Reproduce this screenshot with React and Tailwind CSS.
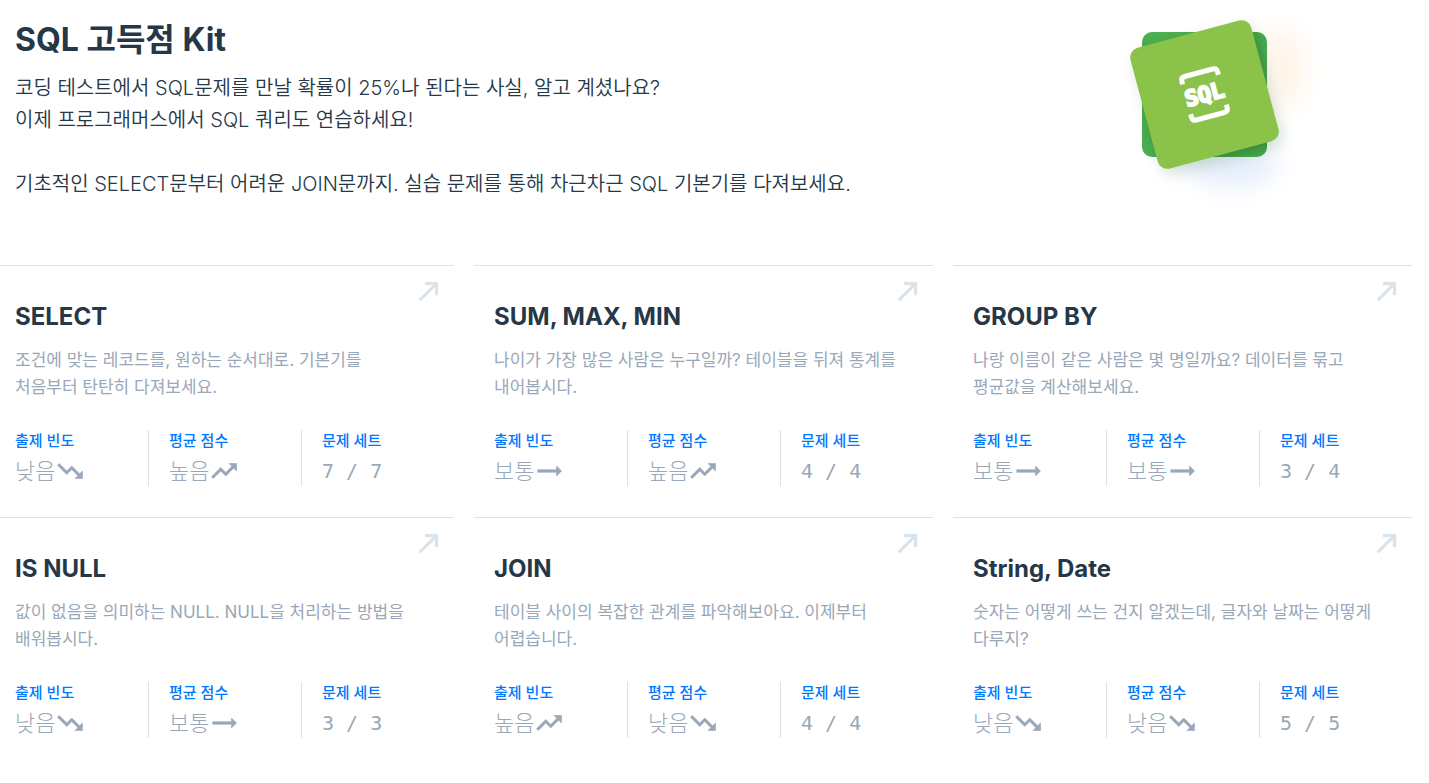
const ICONS = {
  open: 'M9 5v2h6.59L4 18.59 5.41 20 17 8.41V15h2V5z',
  down: 'M16 18l2.29-2.29-4.88-4.88-4 4L2 7.41 3.41 6l6 6 4-4 6.3 6.29L22 12v6z',
  flat: 'M22 12l-4-4v3H3v2h15v3z',
  up: 'M16 6l2.29 2.29-4.88 4.88-4-4L2 16.59 3.41 18l6-6 4 4 6.3-6.29L22 12V6z',
};

const LEVELS = {
  low: { text: '낮음', icon: 'down' },
  mid: { text: '보통', icon: 'flat' },
  high: { text: '높음', icon: 'up' },
};

const PARTS = [
  {
    title: 'SELECT',
    description: '조건에 맞는 레코드를, 원하는 순서대로. 기본기를 처음부터 탄탄히 다져보세요.',
    frequency: 'low',
    score: 'high',
    sets: '7 / 7',
  },
  {
    title: 'SUM, MAX, MIN',
    description: '나이가 가장 많은 사람은 누구일까? 테이블을 뒤져 통계를 내어봅시다.',
    frequency: 'mid',
    score: 'high',
    sets: '4 / 4',
  },
  {
    title: 'GROUP BY',
    description: '나랑 이름이 같은 사람은 몇 명일까요? 데이터를 묶고 평균값을 계산해보세요.',
    frequency: 'mid',
    score: 'mid',
    sets: '3 / 4',
  },
  {
    title: 'IS NULL',
    description: '값이 없음을 의미하는 NULL. NULL을 처리하는 방법을 배워봅시다.',
    frequency: 'low',
    score: 'mid',
    sets: '3 / 3',
  },
  {
    title: 'JOIN',
    description: '테이블 사이의 복잡한 관계를 파악해보아요. 이제부터 어렵습니다.',
    frequency: 'high',
    score: 'low',
    sets: '4 / 4',
  },
  {
    title: 'String, Date',
    description: '숫자는 어떻게 쓰는 건지 알겠는데, 글자와 날짜는 어떻게 다루지?',
    frequency: 'low',
    score: 'low',
    sets: '5 / 5',
  },
];

function Icon({ name, className }) {
  return (
    <svg
      viewBox="0 0 24 24"
      fill="currentColor"
      stroke="currentColor"
      strokeWidth="0.5"
      aria-hidden="true"
      className={`size-[30px] shrink-0 ${className || ''}`}
    >
      <path d={ICONS[name]} />
    </svg>
  );
}

function KitLogo() {
  return (
    <svg width="240" height="210" viewBox="0 0 240 210" className="shrink-0" role="img" aria-label="SQL">
      <defs>
        <filter id="glow" x="-80%" y="-80%" width="260%" height="260%">
          <feGaussianBlur stdDeviation="12" />
        </filter>
        <filter id="shade" x="-30%" y="-30%" width="160%" height="160%">
          <feGaussianBlur stdDeviation="7" />
        </filter>
        <clipPath id="back">
          <rect x="42" y="32" width="125" height="125" rx="10" />
        </clipPath>
      </defs>
      <ellipse cx="182" cy="68" rx="24" ry="40" fill="#fff4e8" filter="url(#glow)" />
      <ellipse cx="132" cy="164" rx="46" ry="22" fill="#e4edfc" filter="url(#glow)" />
      <rect x="46" y="38" width="125" height="125" rx="10" transform="rotate(-15 108 100)" fill="#1b5e20" opacity="0.18" filter="url(#shade)" />
      <rect x="42" y="32" width="125" height="125" rx="10" fill="#4caf50" />
      <g clipPath="url(#back)">
        <rect x="47" y="38" width="125" height="125" rx="10" transform="rotate(-15 109 100)" fill="#1b5e20" opacity="0.45" filter="url(#shade)" />
      </g>
      <g transform="rotate(-15 104.5 94.5)">
        <rect x="42" y="32" width="125" height="125" rx="10" fill="#8bc34a" />
        <path
          d="M86 79V76Q86 72 90 72H119Q123 72 123 76V79M86 110V113Q86 117 90 117H119Q123 117 123 113V110"
          fill="none"
          stroke="#fff"
          strokeWidth="5"
        />
        <text
          x="104.5"
          y="102"
          textAnchor="middle"
          fill="#fff"
          stroke="#fff"
          strokeWidth="2"
          className="font-['DejaVu_Sans_Mono',monospace] text-[22px] font-bold"
        >
          SQL
        </text>
      </g>
    </svg>
  );
}

function Level({ level }) {
  const { text, icon } = LEVELS[level];
  return (
    <>
      <span className="pb-1 font-['Noto_Sans_CJK_KR',sans-serif] text-[22px] font-light">{text}</span>
      <Icon name={icon} />
    </>
  );
}

function Stat({ label, children }) {
  return (
    <div className="flex flex-col gap-1 border-[#d7e2eb] px-5 not-first:border-l">
      <dt className="text-[15px] leading-[22px] font-medium text-[#0078ff]">{label}</dt>
      <dd className="flex h-[30px] items-center font-['DejaVu_Sans_Mono',monospace] text-xl whitespace-pre text-[#98a8b9]">
        {children}
      </dd>
    </div>
  );
}

function PartCard({ part }) {
  return (
    <a href="#" className="block border-t border-[#d7e2eb] pb-[31px]">
      <div className="flex items-start justify-between pt-[10px] pr-[10px] pl-5">
        <h2 className="pt-[23px] text-[24px] leading-9 font-bold text-[#263747]">{part.title}</h2>
        <Icon name="open" className="text-[#d7e2eb]" />
      </div>
      <p className="mt-3 pr-7 pl-5 text-[17px] leading-[27px] break-keep text-[#98a8b9]">{part.description}</p>
      <dl className="mt-[29px] grid grid-cols-3">
        <Stat label="출제 빈도">
          <Level level={part.frequency} />
        </Stat>
        <Stat label="평균 점수">
          <Level level={part.score} />
        </Stat>
        <Stat label="문제 세트">{part.sets}</Stat>
      </dl>
    </a>
  );
}

export default function App() {
  return (
    <main className="mr-[17px] -ml-[5px] bg-white font-['Inter','Noto_Sans_CJK_KR',sans-serif]">
      <header className="flex min-h-[265px] items-start justify-between pr-[72px] pl-5 text-[#263747]">
        <div className="pt-4">
          <h1 className="text-[32px] leading-[48px] font-bold">SQL 고득점 Kit</h1>
          <p className="mt-2 text-[20px] leading-8 font-[350] break-keep">
            코딩 테스트에서 SQL문제를 만날 확률이 25%나 된다는 사실, 알고 계셨나요?
            <br />
            이제 프로그래머스에서 SQL 쿼리도 연습하세요!
            <br />
            <br />
            기초적인 SELECT문부터 어려운 JOIN문까지. 실습 문제를 통해 차근차근 SQL 기본기를 다져보세요.
          </p>
        </div>
        <KitLogo />
      </header>
      <section className="grid grid-cols-3 gap-x-5">
        {PARTS.map((part) => (
          <PartCard key={part.title} part={part} />
        ))}
      </section>
    </main>
  );
}
